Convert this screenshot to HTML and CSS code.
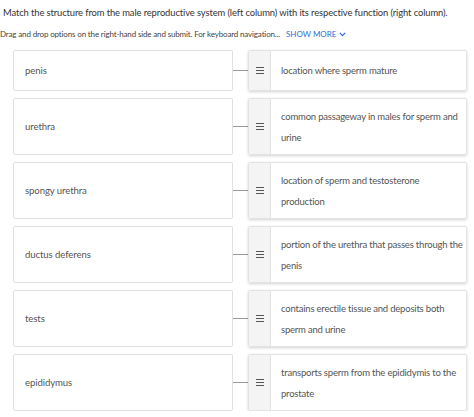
FILE: index.html
```html
<!DOCTYPE html>
<html>
<head>
<meta charset="utf-8">
<link rel="stylesheet" href="styles.css">
</head>
<body>
<div class="page">
  <p class="title">Match the structure from the male reproductive system (left column) with its respective function (right column).</p>
  <p class="hint">Drag and drop options on the right-hand side and submit. For keyboard navigation... <span class="more">SHOW MORE <svg class="chev" width="7" height="5" viewBox="0 0 7 5"><path d="M0.8 0.9 L3.5 3.6 L6.2 0.9" fill="none" stroke="#2f6fd0" stroke-width="1.3"/></svg></span></p>
  <div class="rows">
    <div class="row short">
      <div class="term">penis</div>
      <div class="link"></div>
      <div class="answer"><div class="handle"><span class="burger"></span></div><div class="atext">location where sperm mature</div></div>
    </div>
    <div class="row">
      <div class="term">urethra</div>
      <div class="link"></div>
      <div class="answer"><div class="handle"><span class="burger"></span></div><div class="atext">common passageway in males for sperm and urine</div></div>
    </div>
    <div class="row">
      <div class="term">spongy urethra</div>
      <div class="link"></div>
      <div class="answer"><div class="handle"><span class="burger"></span></div><div class="atext">location of sperm and testosterone production</div></div>
    </div>
    <div class="row">
      <div class="term">ductus deferens</div>
      <div class="link"></div>
      <div class="answer"><div class="handle"><span class="burger"></span></div><div class="atext">portion of the urethra that passes through the penis</div></div>
    </div>
    <div class="row">
      <div class="term">tests</div>
      <div class="link"></div>
      <div class="answer"><div class="handle"><span class="burger"></span></div><div class="atext">contains erectile tissue and deposits both sperm and urine</div></div>
    </div>
    <div class="row">
      <div class="term">epididymus</div>
      <div class="link"></div>
      <div class="answer"><div class="handle"><span class="burger"></span></div><div class="atext">transports sperm from the epididymis to the prostate</div></div>
    </div>
  </div>
</div>
</body>
</html>
```
FILE: styles.css
```css
html, body {
  margin: 0;
  padding: 0;
  background: #ffffff;
}
.page {
  font-family: "Lato", "Liberation Sans", sans-serif;
  color: #3c3c3c;
  width: 474px;
}
.title {
  margin: 0;
  padding: 6px 0 0 3px;
  font-size: 9.4px;
  letter-spacing: -0.1px;
  line-height: 13px;
  color: #333;
}
.hint {
  margin: 0;
  padding: 9px 0 0 0;
  font-size: 8px;
  letter-spacing: -0.15px;
  line-height: 12px;
  color: #444;
}
.more {
  color: #2f6fd0;
  margin-left: 4px;
  letter-spacing: 0;
}
.chev {
  vertical-align: 0px;
  margin-left: 1px;
}
.rows {
  display: flex;
  flex-direction: column;
  gap: 7px;
  padding: 10px 0 0 13px;
}
.row {
  display: flex;
  height: 57px;
}
.row.short {
  height: 41px;
}
.term {
  box-sizing: border-box;
  width: 220px;
  border: 1px solid #e0e0e0;
  border-radius: 2px;
  display: flex;
  align-items: center;
  padding-left: 11px;
  font-size: 9.6px;
  letter-spacing: -0.1px;
  color: #555;
}
.link {
  width: 15px;
  align-self: center;
  height: 1px;
  background: #9a9a9a;
}
.answer {
  box-sizing: border-box;
  width: 219px;
  border: 1px solid #e3e3e3;
  border-radius: 2px;
  box-shadow: 0 1px 3px rgba(0,0,0,0.18);
  display: flex;
}
.handle {
  width: 21px;
  background: #f4f4f4;
  border-right: 1px solid #e2e2e2;
  display: flex;
  align-items: center;
  justify-content: center;
}
.burger {
  width: 8px;
  height: 7px;
  background: linear-gradient(#555 0 1.4px, transparent 1.4px 2.8px, #555 2.8px 4.2px, transparent 4.2px 5.6px, #555 5.6px 7px);
}
.atext {
  flex: 1;
  display: flex;
  align-items: center;
  padding: 0 1px 0 10px;
  font-size: 9.5px;
  letter-spacing: -0.2px;
  line-height: 21px;
  color: #555;
}
```
